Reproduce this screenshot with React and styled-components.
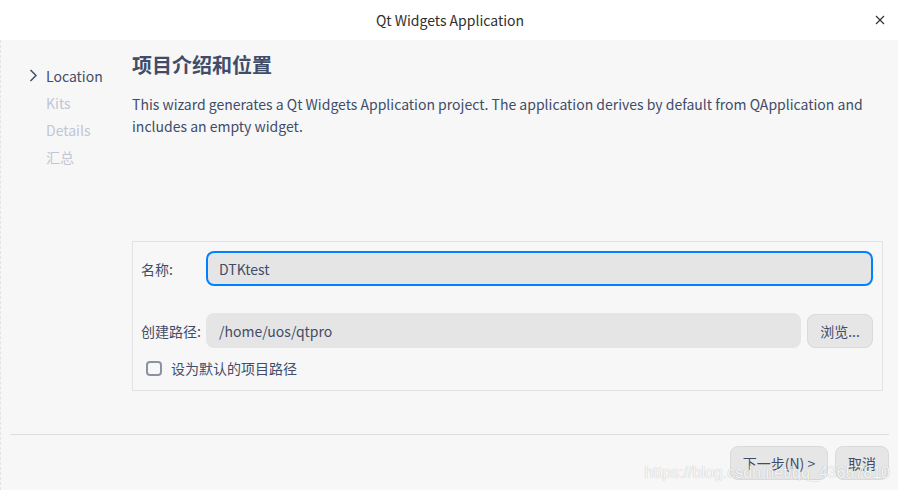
import styled, { createGlobalStyle } from "styled-components"

const GlobalStyle = createGlobalStyle`
  html, body {
    margin: 0;
    padding: 0;
    background: #ffffff;
  }
  * {
    box-sizing: border-box;
  }
`

const FONT = `"Noto Sans CJK SC", "Noto Sans", sans-serif`

const Window = styled.div`
  position: relative;
  display: flex;
  flex-direction: column;
  width: 900px;
  height: 490px;
  font-family: ${FONT};
  color: #414d68;
  overflow: hidden;
`

const TitleBar = styled.div`
  display: grid;
  grid-template-columns: 1fr auto 1fr;
  align-items: center;
  height: 40px;
  background: #ffffff;
`

const Title = styled.div`
  grid-column: 2;
  font-size: 14px;
  color: #303030;
`

const CloseButton = styled.div`
  grid-column: 3;
  justify-self: end;
  display: flex;
  align-items: center;
  justify-content: center;
  width: 40px;
  height: 40px;
`

const Body = styled.div`
  flex: 1;
  display: flex;
  flex-direction: column;
  background: #f7f7f7;
  border-left: 1px dashed #e4e4e4;
  margin-right: 2px;
`

const Main = styled.div`
  flex: 1;
  display: flex;
`

const Sidebar = styled.div`
  width: 131px;
  padding: 22px 0 0 28px;
  display: flex;
  flex-direction: column;
`

const StepItem = styled.div`
  display: flex;
  align-items: center;
  height: 27px;
  font-size: 14px;
  color: ${(p) => (p.$active ? "#414d68" : "#c0c6d4")};
`

const StepMark = styled.span`
  display: flex;
  width: 17px;
`

const Content = styled.div`
  flex: 1;
  padding: 11px 15px 0 0;
  display: flex;
  flex-direction: column;
`

const Heading = styled.h1`
  margin: 0;
  font-size: 20px;
  font-weight: 700;
  line-height: 28px;
  color: #414d68;
`

const Description = styled.p`
  margin: 14px 0 0;
  font-size: 14px;
  line-height: 22px;
  color: #414d68;
`

const GroupBox = styled.div`
  margin-top: 104px;
  border: 1px solid #e3e3e3;
  padding: 9px 9px 12px 8px;
  display: flex;
  flex-direction: column;
`

const FieldRow = styled.div`
  display: flex;
  align-items: center;
  margin-top: ${(p) => p.$gap || 0}px;
`

const Label = styled.span`
  width: 65px;
  font-size: 14px;
  color: #414d68;
`

const TextField = styled.div`
  flex: 1;
  display: flex;
  align-items: center;
  height: 35px;
  padding-left: ${(p) => (p.$focused ? 11 : 13)}px;
  background: #e5e5e5;
  border: ${(p) => (p.$focused ? "2px solid #0081ff" : "none")};
  border-radius: 8px;
  font-size: 14px;
  color: #414d68;
`

const Button = styled.div`
  display: flex;
  align-items: center;
  justify-content: center;
  height: 34px;
  width: ${(p) => p.$width}px;
  margin-left: ${(p) => p.$ml || 0}px;
  background: #e6e6e6;
  border: 1px solid #dadada;
  border-radius: 8px;
  font-size: 14px;
  color: #414d68;
`

const CheckRow = styled.label`
  display: flex;
  align-items: center;
  margin-top: 10px;
  padding-left: 5px;
  font-size: 14px;
  color: #414d68;
`

const CheckBox = styled.span`
  width: 16px;
  height: 15px;
  border: 2px solid #8b93a3;
  border-radius: 4px;
  background: #f7f7f7;
  margin-right: 9px;
`

const Footer = styled.div`
  display: flex;
  flex-direction: column;
  padding: 0 9px 10px 9px;
`

const Separator = styled.div`
  height: 1px;
  background: #dedede;
`

const ButtonBar = styled.div`
  display: flex;
  justify-content: flex-end;
  padding-top: 11px;
`

const Watermark = styled.div`
  position: absolute;
  right: 10px;
  bottom: 8px;
  font-family: "Liberation Sans", Arial, sans-serif;
  font-size: 16px;
  color: rgba(255, 255, 255, 0.9);
  text-shadow: 0 0 1px rgba(0, 0, 0, 0.3);
  pointer-events: none;
`

const steps = [
  { name: "Location", active: true },
  { name: "Kits" },
  { name: "Details" },
  { name: "汇总" },
]

const App = () => {
  return (
    <>
      <GlobalStyle />
      <Window>
        <TitleBar>
          <Title>Qt Widgets Application</Title>
          <CloseButton>
            <svg width="10" height="10" viewBox="0 0 10 10">
              <path d="M1 1L9 9M9 1L1 9" stroke="#303030" strokeWidth="1.1" />
            </svg>
          </CloseButton>
        </TitleBar>
        <Body>
          <Main>
            <Sidebar>
              {steps.map((s) => (
                <StepItem key={s.name} $active={s.active}>
                  <StepMark>
                    {s.active && (
                      <svg width="8" height="13" viewBox="0 0 8 13">
                        <path d="M1.5 1L7 6.5L1.5 12" fill="none" stroke="#414d68" strokeWidth="1.5" />
                      </svg>
                    )}
                  </StepMark>
                  {s.name}
                </StepItem>
              ))}
            </Sidebar>
            <Content>
              <Heading>项目介绍和位置</Heading>
              <Description>
                This wizard generates a Qt Widgets Application project. The application derives by default from QApplication and includes an empty widget.
              </Description>
              <GroupBox>
                <FieldRow>
                  <Label>名称:</Label>
                  <TextField $focused>DTKtest</TextField>
                </FieldRow>
                <FieldRow $gap={27}>
                  <Label>创建路径:</Label>
                  <TextField>/home/uos/qtpro</TextField>
                  <Button $width={66} $ml={6}>浏览...</Button>
                </FieldRow>
                <CheckRow>
                  <CheckBox />
                  设为默认的项目路径
                </CheckRow>
              </GroupBox>
            </Content>
          </Main>
          <Footer>
            <Separator />
            <ButtonBar>
              <Button $width={98}>下一步(N) &gt;</Button>
              <Button $width={54} $ml={7}>取消</Button>
            </ButtonBar>
          </Footer>
        </Body>
        <Watermark>https://blog.csdn.net/qq_43657810</Watermark>
      </Window>
    </>
  )
}

export default App
